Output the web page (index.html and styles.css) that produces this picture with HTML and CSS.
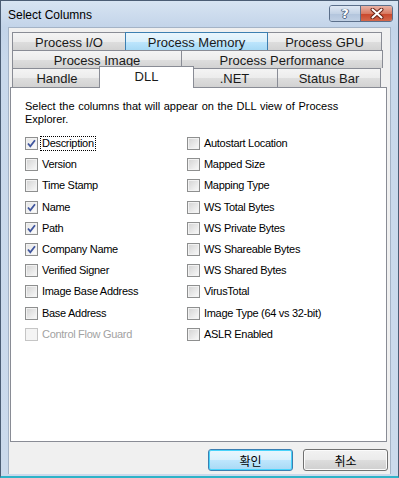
FILE: index.html
```html
<!DOCTYPE html>
<html>
<head>
<meta charset="utf-8">
<link rel="stylesheet" href="styles.css">
</head>
<body>
<div class="window">
  <div class="titlebar">
    <span class="title">Select Columns</span>
    <div class="caption-btns">
      <div class="cbtn help">?</div>
      <div class="cbtn close">
        <svg width="14" height="11" viewBox="0 0 14 11"><path d="M2.5 1.5 L11.5 9.5 M11.5 1.5 L2.5 9.5" stroke="#6a2418" stroke-width="4" stroke-linecap="round"/><path d="M2.5 1.5 L11.5 9.5 M11.5 1.5 L2.5 9.5" stroke="#ffffff" stroke-width="2" stroke-linecap="round"/></svg>
      </div>
    </div>
  </div>
  <div class="client">
    <div class="tabs">
      <div class="tab-row">
        <div class="tab t-io">Process I/O</div>
        <div class="tab t-mem hover">Process Memory</div>
        <div class="tab t-gpu">Process GPU</div>
      </div>
      <div class="tab-row">
        <div class="tab t-img">Process Image</div>
        <div class="tab t-perf">Process Performance</div>
      </div>
      <div class="tab-row last">
        <div class="tab t-handle">Handle</div>
        <div class="tab t-dll selected">DLL</div>
        <div class="tab t-net">.NET</div>
        <div class="tab t-status">Status Bar</div>
      </div>
    </div>
    <div class="panel">
      <p class="intro">Select the columns that will appear on the DLL view of Process Explorer.</p>
      <div class="grid">
        <div class="cb"><span class="box checked"><svg width="11" height="11" viewBox="0 0 11 11"><path d="M2 5.5 L4.3 8.3 L9 2.2" fill="none" stroke="#40569e" stroke-width="1.8"/></svg></span><span class="lbl focus">Description</span></div>
        <div class="cb"><span class="box"></span><span class="lbl">Version</span></div>
        <div class="cb"><span class="box"></span><span class="lbl">Time Stamp</span></div>
        <div class="cb"><span class="box checked"><svg width="11" height="11" viewBox="0 0 11 11"><path d="M2 5.5 L4.3 8.3 L9 2.2" fill="none" stroke="#40569e" stroke-width="1.8"/></svg></span><span class="lbl">Name</span></div>
        <div class="cb"><span class="box checked"><svg width="11" height="11" viewBox="0 0 11 11"><path d="M2 5.5 L4.3 8.3 L9 2.2" fill="none" stroke="#40569e" stroke-width="1.8"/></svg></span><span class="lbl">Path</span></div>
        <div class="cb"><span class="box checked"><svg width="11" height="11" viewBox="0 0 11 11"><path d="M2 5.5 L4.3 8.3 L9 2.2" fill="none" stroke="#40569e" stroke-width="1.8"/></svg></span><span class="lbl">Company Name</span></div>
        <div class="cb"><span class="box"></span><span class="lbl">Verified Signer</span></div>
        <div class="cb"><span class="box"></span><span class="lbl">Image Base Address</span></div>
        <div class="cb"><span class="box"></span><span class="lbl">Base Address</span></div>
        <div class="cb disabled"><span class="box"></span><span class="lbl">Control Flow Guard</span></div>
        <div class="cb"><span class="box"></span><span class="lbl">Autostart Location</span></div>
        <div class="cb"><span class="box"></span><span class="lbl">Mapped Size</span></div>
        <div class="cb"><span class="box"></span><span class="lbl">Mapping Type</span></div>
        <div class="cb"><span class="box"></span><span class="lbl">WS Total Bytes</span></div>
        <div class="cb"><span class="box"></span><span class="lbl">WS Private Bytes</span></div>
        <div class="cb"><span class="box"></span><span class="lbl">WS Shareable Bytes</span></div>
        <div class="cb"><span class="box"></span><span class="lbl">WS Shared Bytes</span></div>
        <div class="cb"><span class="box"></span><span class="lbl">VirusTotal</span></div>
        <div class="cb"><span class="box"></span><span class="lbl">Image Type (64 vs 32-bit)</span></div>
        <div class="cb"><span class="box"></span><span class="lbl">ASLR Enabled</span></div>
      </div>
    </div>
    <div class="buttons">
      <div class="btn default">확인</div>
      <div class="btn">취소</div>
    </div>
  </div>
</div>
</body>
</html>
```

FILE: styles.css
```css
* { box-sizing: border-box; }
html, body { margin: 0; padding: 0; }
body {
  width: 399px;
  height: 478px;
  overflow: hidden;
  font-family: "Liberation Sans", Arial, sans-serif;
  background: #ffffff;
}
.window {
  width: 399px;
  height: 478px;
  display: flex;
  flex-direction: column;
  border: 1px solid #4b5d74;
  border-bottom: 2px solid #2fb3c8;
  background: linear-gradient(#d7e4f2, #c3d4e9 26px, #c8d8eb 60px, #cbdaec);
  padding: 0 7px 2px 7px;
}
.titlebar {
  height: 26px;
  flex: none;
  display: flex;
  align-items: flex-start;
  justify-content: space-between;
  margin-right: -2px;
}
.title {
  font-size: 12px;
  color: #000;
  padding-top: 7px;
  line-height: 14px;
}
.caption-btns {
  display: flex;
  margin-top: 4px;
  border: 1px solid #5b6f8a;
  border-radius: 3px;
  overflow: hidden;
}
.cbtn {
  width: 31px;
  height: 15px;
  display: flex;
  align-items: center;
  justify-content: center;
}
.help {
  background: linear-gradient(#dfe8f3, #c3d2e5 50%, #b2c4dc 51%, #c0d0e4);
  color: #fff;
  font-weight: bold;
  font-size: 13px;
  font-family: "DejaVu Sans", sans-serif;
  text-shadow: 0 0 1px #3c4e6a, 1px 0 0 #5a6f8f, -1px 0 0 #5a6f8f, 0 1px 0 #5a6f8f;
  border-right: 1px solid #5b6f8a;
}
.close {
  background: linear-gradient(#e9b3a6, #d87a62 50%, #c8452a 51%, #d3684c);
}
.client {
  flex: 1;
  background: #f0f0f0;
  display: flex;
  flex-direction: column;
  border: 1px solid #a4b3c6;
  border-bottom: none;
  padding-top: 4px;
}
.tabs {
  margin-left: 3px;
  width: 370px;
  display: flex;
  flex-direction: column;
}
.tab-row {
  display: flex;
  height: 18px;
}
.tab-row.last { height: 19px; }
.tab {
  height: 100%;
  border: 1px solid #898c95;
  border-bottom: none;
  margin-right: -1px;
  background: linear-gradient(#f4f4f4, #ececec 50%, #dedede 51%, #d2d2d2);
  font-size: 13px;
  color: #1a1a1a;
  display: flex;
  align-items: center;
  justify-content: center;
  line-height: 15px;
  padding-top: 1px;
  flex: none;
  white-space: nowrap;
}
.tab:last-child { margin-right: 0; }
.tab.hover {
  background: linear-gradient(#eaf6fd, #d9f0fc 50%, #bee6fd 51%, #a7d9f5);
  border-color: #3c7fb1;
  position: relative;
  z-index: 1;
}
.t-io { width: 114px; }
.t-mem { width: 143px; }
.t-gpu { width: 115px; }
.t-img { width: 170px; }
.t-perf { width: 202px; }
.t-handle { width: 90px; }
.t-dll { width: 92px; }
.t-net { width: 87px; }
.t-status { width: 104px; }
.tab.selected {
  background: #ffffff;
  margin: -2px -3px -1px -2px;
  height: 22px;
  align-items: flex-start;
  padding-top: 2px;
  position: relative;
  z-index: 2;
  width: 95px;
}
.panel {
  margin-left: 1px;
  width: 377px;
  height: 355px;
  flex: none;
  background: #ffffff;
  border: 1px solid #898c95;
  padding: 12px 0 0 14px;
}
.intro {
  margin: 0;
  font-size: 11px;
  line-height: 13px;
  width: 350px;
  color: #000;
  word-spacing: 0.6px;
}
.grid {
  margin-top: 7px;
  display: grid;
  grid-auto-flow: column;
  grid-template-rows: repeat(10, 21.2px);
  grid-template-columns: 162px 180px;
}
.cb {
  display: flex;
  align-items: center;
  font-size: 11px;
  color: #000;
  letter-spacing: -0.3px;
}
.box {
  width: 13px;
  height: 13px;
  flex: none;
  border: 1px solid #8e8f8f;
  background: linear-gradient(135deg, #d2d2d2, #eeeeee 70%, #fafafa);
  box-shadow: inset 0 0 0 1px #f2f2f2;
  display: flex;
  align-items: center;
  justify-content: center;
}
.box.checked {
  background: linear-gradient(135deg, #e4e4e4, #f6f6f6 70%, #ffffff);
}
.lbl {
  margin-left: 2px;
  border: 1px dotted transparent;
  padding: 0 1px;
  line-height: 13px;
}
.lbl.focus { border-color: #000; }
.cb.disabled .lbl { color: #a2a2a2; }
.cb.disabled .box {
  border-color: #c5c5c5;
  background: #f4f4f4;
  box-shadow: none;
}
.buttons {
  display: flex;
  justify-content: flex-end;
  gap: 10px;
  margin-top: 7px;
  padding-right: 2px;
}
.btn {
  width: 85px;
  height: 22px;
  border: 1px solid #707070;
  border-radius: 3px;
  background: linear-gradient(#f2f2f2, #ebebeb 50%, #dddddd 51%, #cfcfcf);
  box-shadow: inset 0 0 0 1px #fbfbfb;
  font-family: "Noto Sans CJK KR", sans-serif;
  font-size: 12px;
  display: flex;
  align-items: center;
  justify-content: center;
  color: #000;
}
.btn.default {
  border-color: #3c7fb1;
  background: linear-gradient(#eaf6fd, #d9f0fc 50%, #bee6fd 51%, #a7d9f5);
  box-shadow: inset 0 0 0 1px #48d3fb;
}
```
